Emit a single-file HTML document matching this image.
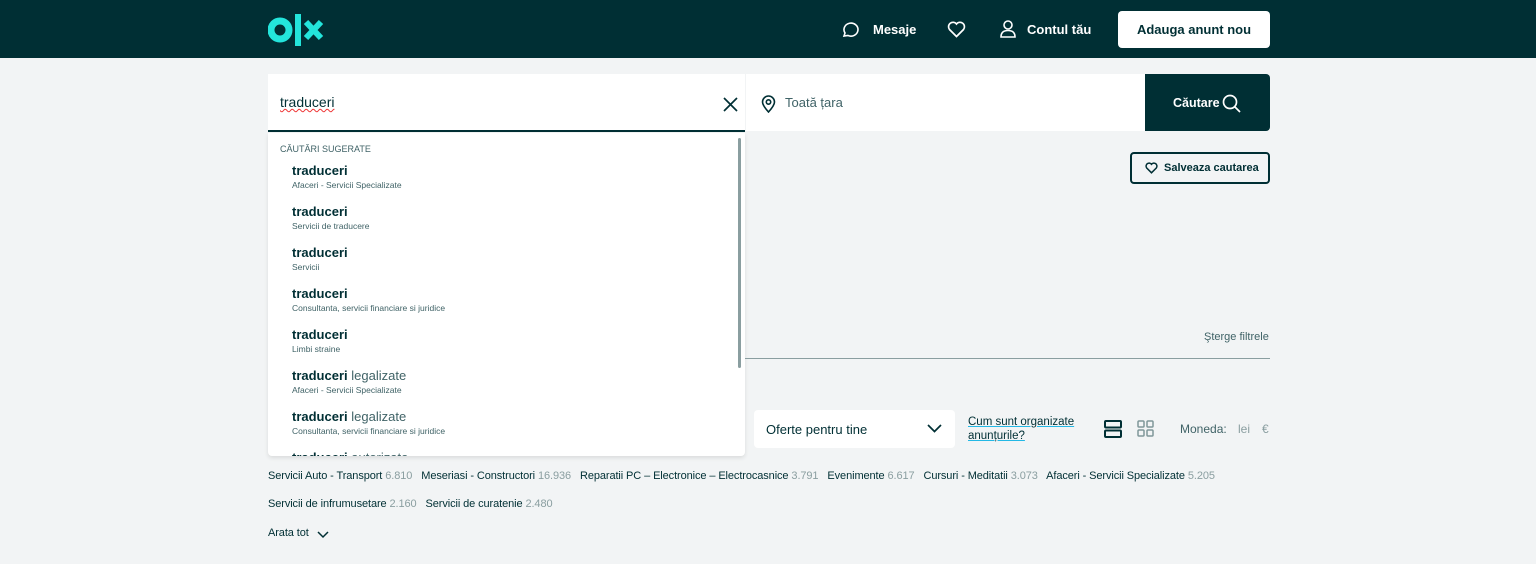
<!DOCTYPE html>
<html><head><meta charset="utf-8"><style>
*{margin:0;padding:0;box-sizing:border-box}
body{width:1536px;height:564px;background:#f2f4f5;font-family:"Liberation Sans",sans-serif;color:#002f34;position:relative;overflow:hidden}
.a{position:absolute}
.hdr{left:0;top:0;width:1536px;height:58px;background:#002f34}
.w{color:#fff;font-weight:bold;font-size:13px}
.it .t{font-size:13px;font-weight:bold;color:#002f34}
.it .t span{font-weight:normal;color:#406367}
.it .s{font-size:8.5px;color:#406367;margin-top:2px}
.cat{font-size:11px;color:#406367;white-space:nowrap;letter-spacing:-0.1px}
.cat b{font-weight:normal;color:#002f34}
.cat i{font-style:normal;color:#8a9ea0;margin-right:6px}
</style></head><body>
<div class="a hdr"></div>
<svg class="a" style="left:268px;top:13px" width="62" height="34" viewBox="0 0 62 34"><circle cx="12" cy="17" r="9" fill="none" stroke="#23e5db" stroke-width="7"/><rect x="27" y="1" width="6" height="32" fill="#23e5db"/><path d="M38 9 L53 25 M53 9 L38 25" stroke="#23e5db" stroke-width="6"/></svg>
<svg class="a" style="left:841px;top:21px" width="18" height="18" viewBox="0 0 18 18" fill="none" stroke="#fff" stroke-width="1.6"><path d="M3 15 L4 12 A7 6.5 0 1 1 7 14.5 Z"/></svg>
<div class="a w" style="left:873px;top:22px">Mesaje</div>
<svg class="a" style="left:947px;top:21px" width="19" height="17" viewBox="0 0 19 17" fill="none" stroke="#fff" stroke-width="1.7"><path d="M9.5 15.5 L2.5 8.5 A4 4 0 0 1 9.5 3 A4 4 0 0 1 16.5 8.5 Z"/></svg>
<svg class="a" style="left:999px;top:19px" width="18" height="20" viewBox="0 0 18 20" fill="none" stroke="#fff" stroke-width="1.6"><circle cx="9" cy="6" r="4"/><path d="M2 18 C2 13 5 11.5 9 11.5 C13 11.5 16 13 16 18 Z"/></svg>
<div class="a w" style="left:1027px;top:22px">Contul tău</div>
<div class="a" style="left:1118px;top:11px;width:152px;height:37px;background:#fff;border-radius:4px;font-size:13px;font-weight:bold;text-align:center;line-height:37px">Adauga anunt nou</div>

<div class="a" style="left:268px;top:74px;width:477px;height:58px;background:#fff;border-bottom:2px solid #002f34"></div>
<div class="a" style="left:280px;top:94px;font-size:14px;color:#002f34;text-decoration:underline wavy #e33;text-decoration-thickness:1px">traduceri</div>
<svg class="a" style="left:723px;top:97px" width="15" height="15" viewBox="0 0 15 15" stroke="#002f34" stroke-width="1.7"><path d="M1 1L14 14M14 1L1 14"/></svg>
<div class="a" style="left:746px;top:74px;width:399px;height:57px;background:#fff"></div>
<svg class="a" style="left:761px;top:95px" width="15" height="18" viewBox="0 0 15 18" fill="none" stroke="#002f34" stroke-width="1.6"><path d="M7.5 17 C3 12 1.5 9 1.5 7 A6 6 0 0 1 13.5 7 C13.5 9 12 12 7.5 17Z"/><circle cx="7.5" cy="7" r="2.2"/></svg>
<div class="a" style="left:785px;top:95px;font-size:13px;color:#406367">Toată țara</div>
<div class="a" style="left:1145px;top:74px;width:125px;height:57px;background:#002f34;border-radius:0 4px 4px 0"></div>
<div class="a w" style="left:1173px;top:96px;font-size:12.5px">Căutare</div>
<svg class="a" style="left:1222px;top:94px" width="19" height="19" viewBox="0 0 19 19" fill="none" stroke="#fff" stroke-width="1.7"><circle cx="8" cy="8" r="6.5"/><path d="M13 13L18 18"/></svg>

<div class="a" style="left:268px;top:133px;width:477px;height:323px;background:#fff;border-radius:0 0 4px 4px;box-shadow:0 2px 4px rgba(0,0,0,.1);overflow:hidden">
<div class="a" style="left:470px;top:5px;width:3px;height:230px;background:#8a9ea0;border-radius:2px"></div>
<div class="a" style="left:12px;top:11px;font-size:9px;color:#406367">CĂUTĂRI SUGERATE</div>
<div class="a it" style="left:24px;top:30px"><div class="t">traduceri</div><div class="s">Afaceri - Servicii Specializate</div></div>
<div class="a it" style="left:24px;top:71px"><div class="t">traduceri</div><div class="s">Servicii de traducere</div></div>
<div class="a it" style="left:24px;top:112px"><div class="t">traduceri</div><div class="s">Servicii</div></div>
<div class="a it" style="left:24px;top:153px"><div class="t">traduceri</div><div class="s">Consultanta, servicii financiare si juridice</div></div>
<div class="a it" style="left:24px;top:194px"><div class="t">traduceri</div><div class="s">Limbi straine</div></div>
<div class="a it" style="left:24px;top:235px"><div class="t">traduceri <span>legalizate</span></div><div class="s">Afaceri - Servicii Specializate</div></div>
<div class="a it" style="left:24px;top:276px"><div class="t">traduceri <span>legalizate</span></div><div class="s">Consultanta, servicii financiare si juridice</div></div>
<div class="a it" style="left:24px;top:317px"><div class="t">traduceri <span>autorizate</span></div></div>
</div>

<div class="a" style="left:1130px;top:152px;width:140px;height:32px;border:2px solid #002f34;border-radius:4px"></div>
<svg class="a" style="left:1145px;top:162px" width="13" height="12" viewBox="0 0 19 17" fill="none" stroke="#002f34" stroke-width="2.2"><path d="M9.5 15.5 L2.5 8.5 A4 4 0 0 1 9.5 3 A4 4 0 0 1 16.5 8.5 Z"/></svg>
<div class="a" style="left:1164px;top:162px;font-size:11px;font-weight:bold">Salveaza cautarea</div>

<div class="a" style="left:1204px;top:331px;font-size:11px;color:#406367">Şterge filtrele</div>
<div class="a" style="left:745px;top:358px;width:525px;height:1px;background:#8a9ea0"></div>

<div class="a" style="left:754px;top:410px;width:201px;height:38px;background:#fff;border-radius:4px"></div>
<div class="a" style="left:766px;top:422px;font-size:13px">Oferte pentru tine</div>
<svg class="a" style="left:927px;top:424px" width="15" height="9" viewBox="0 0 15 9" fill="none" stroke="#002f34" stroke-width="1.7"><path d="M1 1L7.5 7.5L14 1"/></svg>
<div class="a" style="left:968px;top:415px;font-size:11.5px;line-height:14px;color:#002f34;text-decoration:underline;text-decoration-color:#23b8e5">Cum sunt organizate<br>anunțurile?</div>
<svg class="a" style="left:1104px;top:420px" width="18" height="18" viewBox="0 0 18 18" fill="none" stroke="#002f34" stroke-width="2"><rect x="1" y="1" width="16" height="6.5" rx="1"/><rect x="1" y="10.5" width="16" height="6.5" rx="1"/></svg>
<svg class="a" style="left:1137px;top:420px" width="17" height="17" viewBox="0 0 17 17" fill="none" stroke="#7f9799" stroke-width="1.5"><rect x="1" y="1" width="6" height="6" rx="1"/><rect x="10" y="1" width="6" height="6" rx="1"/><rect x="1" y="10" width="6" height="6" rx="1"/><rect x="10" y="10" width="6" height="6" rx="1"/></svg>
<div class="a" style="left:1180px;top:422px;font-size:12px;color:#406367">Moneda:</div>
<div class="a" style="left:1238px;top:422px;font-size:12px;color:#8a9ea0">lei</div>
<div class="a" style="left:1262px;top:422px;font-size:12px;color:#8a9ea0">€</div>

<div class="a cat" style="left:268px;top:470px"><b>Servicii Auto - Transport</b> <i>6.810</i> <b>Meseriasi - Constructori</b> <i>16.936</i> <b>Reparatii PC – Electronice – Electrocasnice</b> <i>3.791</i> <b>Evenimente</b> <i>6.617</i> <b>Cursuri - Meditatii</b> <i>3.073</i> <b>Afaceri - Servicii Specializate</b> <i>5.205</i></div>
<div class="a cat" style="left:268px;top:498px"><b>Servicii de infrumusetare</b> <i>2.160</i> <b>Servicii de curatenie</b> <i>2.480</i></div>
<div class="a cat" style="left:268px;top:527px"><b>Arata tot</b></div>
<svg class="a" style="left:317px;top:531px" width="12" height="8" viewBox="0 0 12 8" fill="none" stroke="#002f34" stroke-width="1.5"><path d="M1 1L6 6L11 1"/></svg>
</body></html>
